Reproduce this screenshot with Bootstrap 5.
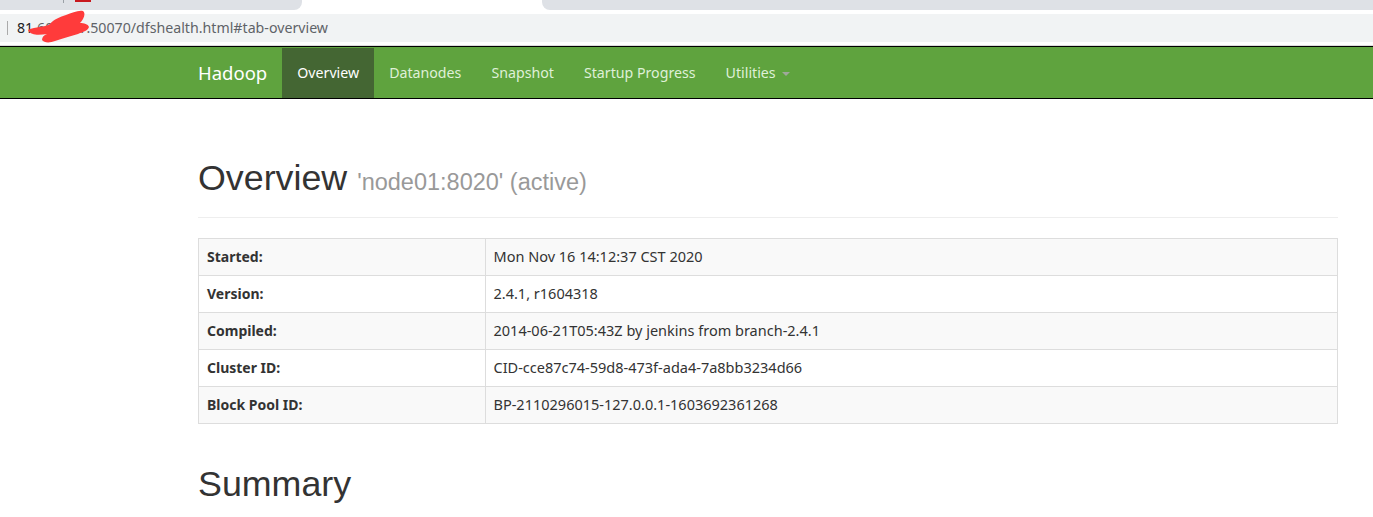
<!DOCTYPE html>
<html lang="en"><head><meta charset="utf-8"><title>Namenode information</title>
<link rel="stylesheet" href="https://cdn.jsdelivr.net/npm/bootstrap@5.3.0/dist/css/bootstrap.min.css">
<style>
html,body{height:517px;overflow:hidden}
body{font-family:"Noto Sans","Liberation Sans",sans-serif;font-size:14px;color:#333;background:#fff}
.tabstrip{height:10px;background:#fff}
.tabgray{background:#dee1e6;height:10px}
.tabgray-l{width:302px;border-bottom-right-radius:8px;position:relative}
.tabgray-r{flex:1;margin-left:240px;border-bottom-left-radius:8px}
.sep-v{position:absolute;left:63px;top:0;width:1px;height:3px;background:#9aa0a6}
.fav{position:absolute;left:75px;top:0;width:16px;height:2px;background:#c8181e}
.addr{margin-top:4px;height:28px;background:#f1f3f4;font-size:14.2px;color:#5f6368;line-height:28px;position:relative;padding-left:17px}
.addr-sep{position:absolute;left:7px;top:7px;width:1px;height:14px;background:#aaa}
.addr b{font-weight:400;color:#202124}
.hiddenip{margin-right:3px}
.scribble{position:absolute;left:26px;top:-4px;width:66px;height:34px}
.topnav{margin-top:4px;height:53px;background:#5fa33e;border-top:1px solid #000;border-bottom:1px solid #000;box-shadow:0 -1px 0 #ddd;padding:0}
.navin{padding-left:183px;height:50px}
.topnav .navbar-brand{color:#fff;font-size:18.5px;padding:0;margin:0 15px 0 15px;line-height:50px}
.topnav .navbar-nav .nav-link{color:#dff0d8;padding:0 15px;line-height:50px;font-size:14.2px}
.topnav .navbar-nav .nav-link.active{color:#fff;background:#446633}
.caretx{display:inline-block;margin-left:6px;vertical-align:middle;border-top:4px solid #9fa89a;border-left:4px solid transparent;border-right:4px solid transparent}
.pagewrap{padding:0 35px 0 198px}
.headline{margin:60px 0 20px;padding-bottom:19px;border-bottom:1px solid #eee;font-family:"Liberation Sans",sans-serif;font-size:35.8px;font-weight:500;line-height:1.1;color:#333}
.headline small{font-size:23.5px;font-weight:400;color:#999}
.infotab{margin:0 0 20px;border:1px solid #ddd;width:100%;font-size:14px}
.infotab th,.infotab td{padding:8px;line-height:20px;border:1px solid #ddd;box-shadow:none;color:#333}
.infotab th{width:287px;font-weight:700}
.infotab td{font-size:14.5px;padding:7px 8px 9px 7.5px}
.infotab tr:nth-child(odd) th,.infotab tr:nth-child(odd) td{background:#f9f9f9}
.sechead{font-family:"Liberation Sans",sans-serif;font-size:35.8px;font-weight:500;line-height:1.1;margin:41px 0 0;color:#333}
</style></head>
<body>
<div class="tabstrip d-flex">
  <div class="tabgray tabgray-l"><span class="sep-v"></span><span class="fav"></span></div>
  <div class="tabgray tabgray-r"></div>
</div>
<div class="addr"><span class="addr-sep"></span><b>81.</b><span class="hiddenip">60.xx.x</span>.50070/dfshealth.html#tab-overview
  <svg class="scribble" viewBox="0 0 66 34" aria-hidden="true"><path d="M2 20 C10 16 18 18 24 14 C28 9 34 7 40 5 C46 3 52 0 57 1 C60 3 58 9 54 13 C58 13 62 14 63 17 C62 21 56 22 52 24 C44 26 36 29 29 31 C24 33 18 33 16 30 C16 27 18 25 21 24 C14 25 5 26 2 20Z" fill="#ff3b3b"/></svg>
</div>
<nav class="navbar navbar-expand topnav">
  <div class="navin d-flex align-items-stretch w-100">
    <a class="navbar-brand" href="#">Hadoop</a>
    <ul class="navbar-nav">
      <li class="nav-item"><a class="nav-link active" href="#">Overview</a></li>
      <li class="nav-item"><a class="nav-link" href="#">Datanodes</a></li>
      <li class="nav-item"><a class="nav-link" href="#">Snapshot</a></li>
      <li class="nav-item"><a class="nav-link" href="#">Startup Progress</a></li>
      <li class="nav-item"><a class="nav-link" href="#">Utilities<span class="caretx"></span></a></li>
    </ul>
  </div>
</nav>
<main class="pagewrap">
  <h1 class="headline">Overview <small>'node01:8020' (active)</small></h1>
  <table class="table infotab">
    <tbody>
      <tr><th>Started:</th><td>Mon Nov 16 14:12:37 CST 2020</td></tr>
      <tr><th>Version:</th><td>2.4.1, r1604318</td></tr>
      <tr><th>Compiled:</th><td>2014-06-21T05:43Z by jenkins from branch-2.4.1</td></tr>
      <tr><th>Cluster ID:</th><td>CID-cce87c74-59d8-473f-ada4-7a8bb3234d66</td></tr>
      <tr><th>Block Pool ID:</th><td>BP-2110296015-127.0.0.1-1603692361268</td></tr>
    </tbody>
  </table>
  <h2 class="sechead">Summary</h2>
</main>
<script src="https://cdn.jsdelivr.net/npm/bootstrap@5.3.0/dist/js/bootstrap.bundle.min.js"></script>
</body></html>
